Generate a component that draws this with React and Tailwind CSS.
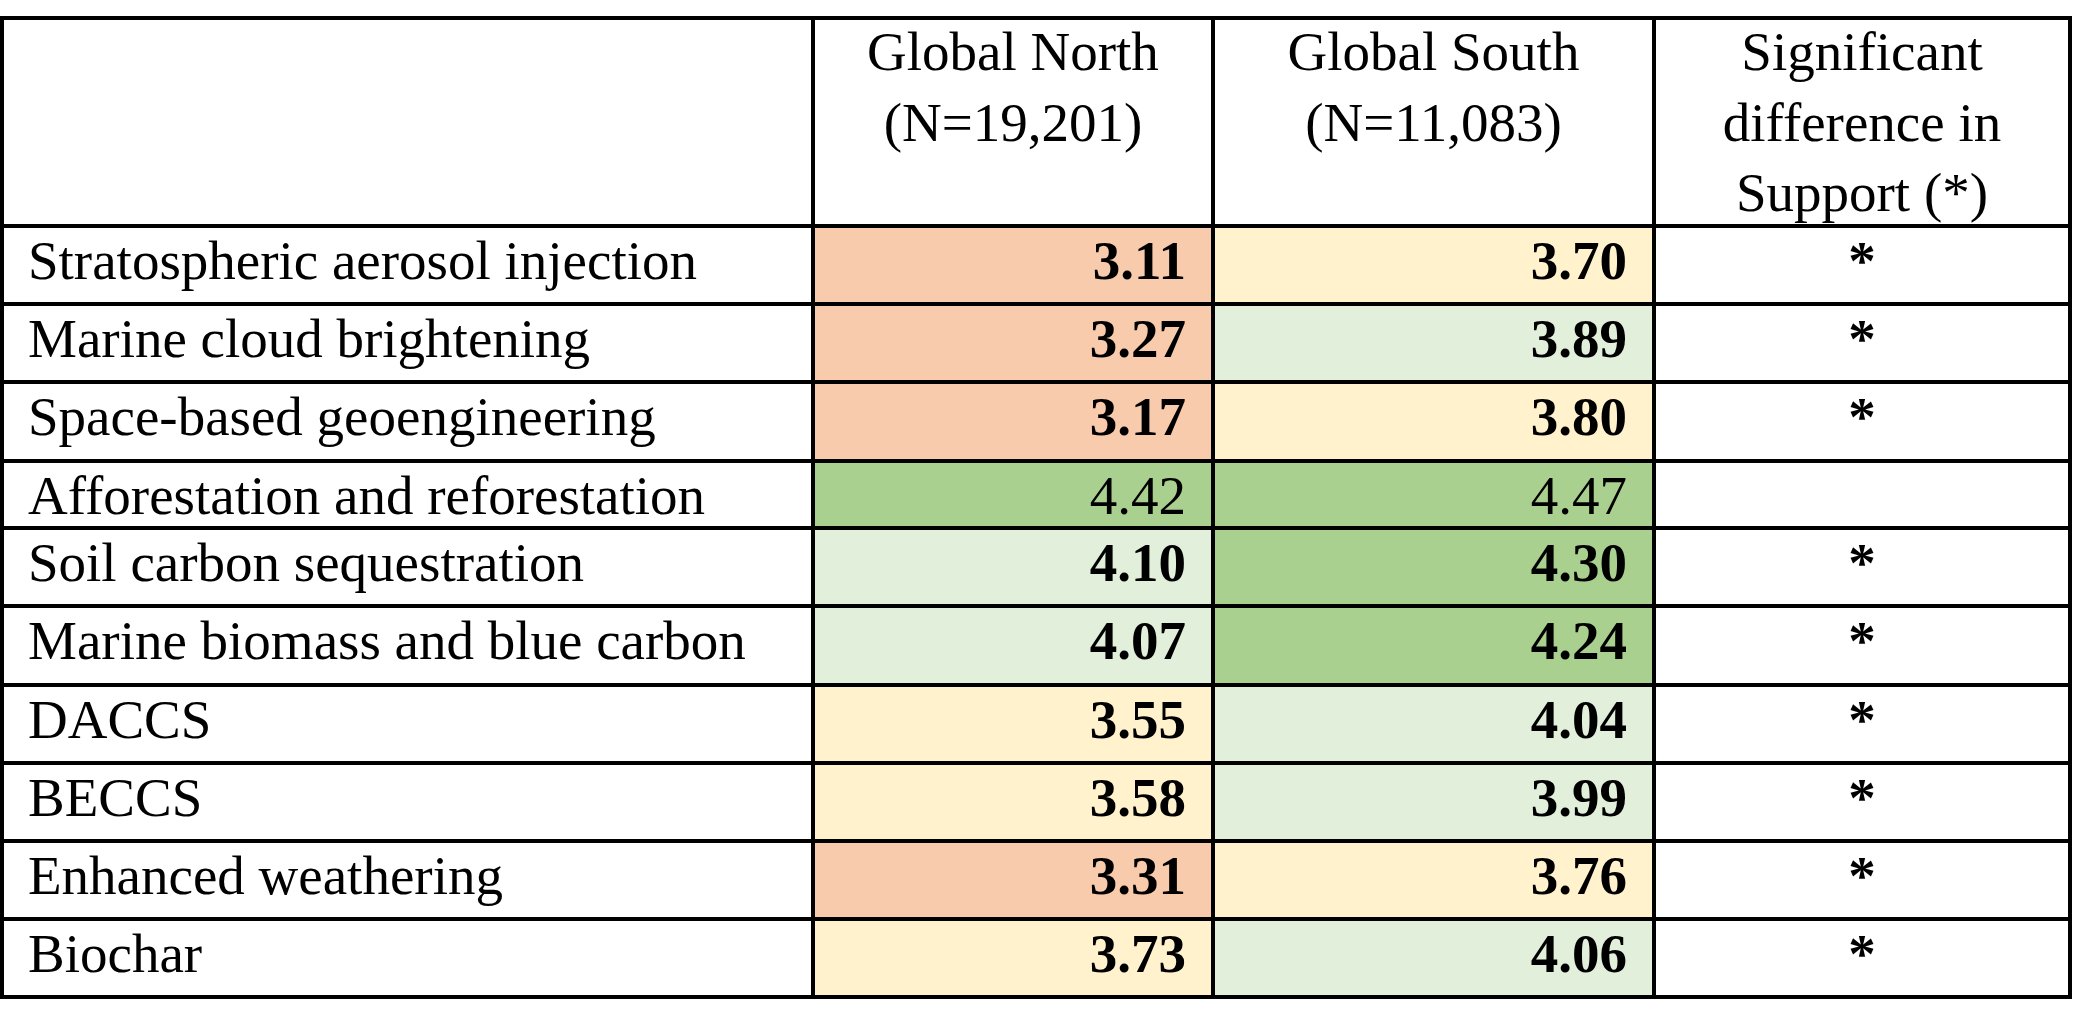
const SALMON = "bg-[#f8cbad]";
const YELLOW = "bg-[#fff2cc]";
const LIGHT = "bg-[#e2efda]";
const GREEN = "bg-[#a9d08e]";

const ROWS = [
  { label: "Stratospheric aerosol injection", north: "3.11", nBg: SALMON, south: "3.70", sBg: YELLOW, sig: true },
  { label: "Marine cloud brightening", north: "3.27", nBg: SALMON, south: "3.89", sBg: LIGHT, sig: true },
  { label: "Space-based geoengineering", north: "3.17", nBg: SALMON, south: "3.80", sBg: YELLOW, sig: true },
  { label: "Afforestation and reforestation", north: "4.42", nBg: GREEN, south: "4.47", sBg: GREEN, sig: false },
  { label: "Soil carbon sequestration", north: "4.10", nBg: LIGHT, south: "4.30", sBg: GREEN, sig: true },
  { label: "Marine biomass and blue carbon", north: "4.07", nBg: LIGHT, south: "4.24", sBg: GREEN, sig: true },
  { label: "DACCS", north: "3.55", nBg: YELLOW, south: "4.04", sBg: LIGHT, sig: true },
  { label: "BECCS", north: "3.58", nBg: YELLOW, south: "3.99", sBg: LIGHT, sig: true },
  { label: "Enhanced weathering", north: "3.31", nBg: SALMON, south: "3.76", sBg: YELLOW, sig: true },
  { label: "Biochar", north: "3.73", nBg: YELLOW, south: "4.06", sBg: LIGHT, sig: true },
];

const cell = "border-r-4 border-b-4 border-black overflow-hidden";

function HeaderCell({ children }) {
  return (
    <div className={`${cell} bg-white text-center leading-[70.5px]`}>
      <div className="-mt-[3px]">{children}</div>
    </div>
  );
}

export default function App() {
  return (
    <div className="min-h-screen bg-white pt-4 font-['Liberation_Serif','Times_New_Roman',serif] text-[55px] text-black">
      <div className="grid w-fit grid-cols-[811px_400px_441px_416px] grid-rows-[208px_78px_78px_79px_67px_78px_79px_78px_78px_78px_78px] border-l-4 border-t-4 border-black">
        <div className={`${cell} bg-white`} />
        <HeaderCell>
          Global North
          <br />
          (N=19,201)
        </HeaderCell>
        <HeaderCell>
          Global South
          <br />
          (N=11,083)
        </HeaderCell>
        <HeaderCell>
          Significant
          <br />
          difference in
          <br />
          Support (*)
        </HeaderCell>

        {ROWS.map((r) => {
          const weight = r.sig ? "font-bold" : "font-normal";
          return [
            <div key={r.label + "-l"} className={`${cell} bg-white pl-6 leading-[65px] whitespace-nowrap`}>
              {r.label}
            </div>,
            <div key={r.label + "-n"} className={`${cell} ${r.nBg} pr-[25px] text-right leading-[65px] ${weight}`}>
              {r.north}
            </div>,
            <div key={r.label + "-s"} className={`${cell} ${r.sBg} pr-[25px] text-right leading-[65px] ${weight}`}>
              {r.south}
            </div>,
            <div key={r.label + "-x"} className={`${cell} bg-white text-center leading-[65px] font-bold`}>
              {r.sig ? "*" : ""}
            </div>,
          ];
        })}
      </div>
    </div>
  );
}
